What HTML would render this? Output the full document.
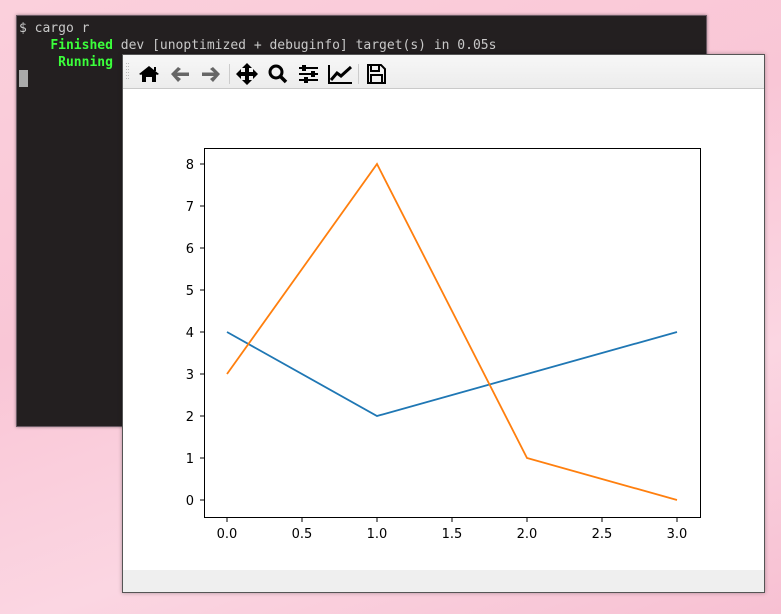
<!DOCTYPE html>
<html><head><style>
body{margin:0;width:781px;height:614px;overflow:hidden;background:linear-gradient(160deg,#fbd0dc 0%,#f9c6d6 40%,#fbd6e2 70%,#f7c0d2 100%);position:relative;font-family:"DejaVu Sans","Liberation Sans",sans-serif}
.term{position:absolute;left:16px;top:15px;width:689px;height:410px;background:#231f20;border:1px solid #6a5a64;box-shadow:0 0 3px rgba(0,0,0,.4)}
.term pre{margin:0;position:absolute;left:2px;top:4px;font-family:"DejaVu Sans Mono","Liberation Mono",monospace;font-size:13px;line-height:17px;color:#c8c8c8}
.g{color:#3bff3b;font-weight:bold}
.cur{position:absolute;left:2px;top:54px;width:9px;height:17px;background:#aaa}
.win{position:absolute;left:122px;top:54px;width:641px;height:537px;background:#fff;border:1px solid #555;box-shadow:0 0 4px rgba(0,0,0,.3)}
.tb{position:absolute;left:0;top:0;width:641px;height:33px;background:linear-gradient(#f7f7f7,#ececec);border-bottom:1px solid #c9c9c9}
.sb{position:absolute;left:0;bottom:0;width:641px;height:22px;background:#efefef}
</style></head><body>
<div class="term"><pre>$ cargo r
    <span class="g">Finished</span> dev [unoptimized + debuginfo] target(s) in 0.05s
     <span class="g">Running</span></pre><div class="cur"></div></div>
<div class="win">
<div class="tb">
<svg width="641" height="33" style="position:absolute;left:0;top:0">
<g fill="#bbb"><rect x="3" y="8" width="1" height="1"/><rect x="5" y="8" width="1" height="1"/><rect x="3" y="11" width="1" height="1"/><rect x="5" y="11" width="1" height="1"/><rect x="3" y="14" width="1" height="1"/><rect x="5" y="14" width="1" height="1"/><rect x="3" y="17" width="1" height="1"/><rect x="5" y="17" width="1" height="1"/><rect x="3" y="20" width="1" height="1"/><rect x="5" y="20" width="1" height="1"/><rect x="3" y="23" width="1" height="1"/><rect x="5" y="23" width="1" height="1"/></g>
<path d="M16 19 L26 11 L36 19 L34 20 L26 14 L18 20Z M19 19 L26 14 L33 19 V27 H29 V22 H23 V27 H19Z M31 12 h2 v4 h-2z" fill="#000"/>
<path d="M48 19 L55 12 L58 14 L54 17.5 H66 V21 H54 L58 24 L55 27Z" fill="#666"/>
<path d="M97 19 L90 12 L87 14 L91 17.5 H79 V21 H91 L87 24 L90 27Z" fill="#666"/>
<line x1="106.5" y1="9" x2="106.5" y2="29" stroke="#ccc"/>
<g fill="#000"><path d="M124 8 L129 13 H126 V17 H130 V14 L135 19 L130 24 V21 H126 V25 H129 L124 30 L119 25 H122 V21 H118 V24 L113 19 L118 14 V17 H122 V13 H119Z"/></g>
<circle cx="153" cy="17" r="6" fill="none" stroke="#000" stroke-width="3"/><path d="M157 21 L163 27" stroke="#000" stroke-width="3.5"/>
<g stroke="#000" stroke-width="2"><line x1="176" y1="13" x2="195" y2="13"/><line x1="176" y1="19" x2="195" y2="19"/><line x1="176" y1="25" x2="195" y2="25"/></g>
<g fill="#000"><rect x="179" y="10" width="4" height="6"/><rect x="188" y="16" width="4" height="6"/><rect x="181" y="22" width="4" height="6"/></g>
<path d="M206 10 V28 H229" fill="none" stroke="#000" stroke-width="2"/><path d="M208 25 L214 18 L218 21 L228 12" fill="none" stroke="#000" stroke-width="3"/>
<line x1="235.5" y1="9" x2="235.5" y2="29" stroke="#ccc"/>
<path d="M245 10 H258 L262 14 V28 H245Z" fill="none" stroke="#000" stroke-width="2"/><rect x="248" y="10" width="8" height="6" fill="none" stroke="#000" stroke-width="2"/><rect x="248" y="20" width="11" height="8" fill="none" stroke="#000" stroke-width="2"/>
</svg>
</div>
<svg width="641" height="537" style="position:absolute;left:0;top:0">
<g transform="translate(-123,-55)" font-family="DejaVu Sans,Liberation Sans,sans-serif" font-size="13" fill="#000">
<rect x="204.5" y="148.5" width="496" height="369" fill="#fff" stroke="#000"/>
<g stroke="#000">
<line x1="200" x2="204" y1="164" y2="164"/><line x1="200" x2="204" y1="206" y2="206"/><line x1="200" x2="204" y1="248" y2="248"/><line x1="200" x2="204" y1="290" y2="290"/><line x1="200" x2="204" y1="332" y2="332"/><line x1="200" x2="204" y1="374" y2="374"/><line x1="200" x2="204" y1="416" y2="416"/><line x1="200" x2="204" y1="458" y2="458"/><line x1="200" x2="204" y1="500" y2="500"/>
<line x1="227" x2="227" y1="518" y2="522"/><line x1="302" x2="302" y1="518" y2="522"/><line x1="377" x2="377" y1="518" y2="522"/><line x1="452" x2="452" y1="518" y2="522"/><line x1="527" x2="527" y1="518" y2="522"/><line x1="602" x2="602" y1="518" y2="522"/><line x1="677" x2="677" y1="518" y2="522"/>
</g>
<g text-anchor="end"><text x="194" y="169">8</text><text x="194" y="211">7</text><text x="194" y="253">6</text><text x="194" y="295">5</text><text x="194" y="337">4</text><text x="194" y="379">3</text><text x="194" y="421">2</text><text x="194" y="463">1</text><text x="194" y="505">0</text></g>
<g text-anchor="middle"><text x="227" y="538">0.0</text><text x="302" y="538">0.5</text><text x="377" y="538">1.0</text><text x="452" y="538">1.5</text><text x="527" y="538">2.0</text><text x="602" y="538">2.5</text><text x="677" y="538">3.0</text></g>
<polyline points="227,332 377,416 527,374 677,332" fill="none" stroke="#1f77b4" stroke-width="1.8"/>
<polyline points="227,374 377,164 527,458 677,500" fill="none" stroke="#ff7f0e" stroke-width="1.8"/>
</g></svg>
<div class="sb"></div>
</div>
</body></html>
